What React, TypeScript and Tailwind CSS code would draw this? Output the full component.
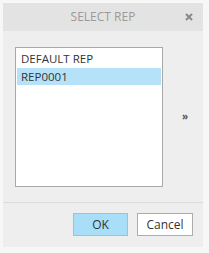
import React from "react";

export default function App() {
  return (
    <div className="w-[209px] h-[253px] bg-[#f7f7f7] p-[3px] pb-[6px]" style={{ fontFamily: '"Open Sans", "Noto Sans", sans-serif' }}>
      <div className="flex h-full w-[200px] flex-col bg-[#eeeeee]">
        <div className="relative flex h-[28px] items-center justify-center bg-[#e3e3e3]">
          <span className="text-[12px] text-[#9a9a9a]">SELECT REP</span>
          <svg className="absolute right-[10px] top-[10px]" width="8" height="8" viewBox="0 0 8 8">
            <path d="M1 1L7 7M7 1L1 7" stroke="#8a8a8a" strokeWidth="2" />
          </svg>
        </div>
        <div className="flex flex-1 pl-[12px] pt-[16px]">
          <div className="h-[140px] w-[148px] border border-[#a9a9a9] bg-white p-[1px] text-[11.5px] leading-[17px] text-[#333]">
            <div className="px-[4px] py-[1px]">DEFAULT REP</div>
            <div className="bg-[#b5e2f9] px-[4px] py-[0px]">REP0001</div>
          </div>
          <div className="flex flex-1 items-start justify-center pt-[62px] pl-[4px] text-[10px] font-bold text-[#555]">»</div>
        </div>
        <div className="border-t border-[#dcdcdc] h-[45px] flex items-start justify-end gap-[9px] pr-[10px] pt-[10px]">
          <div className="flex h-[23px] w-[55px] items-center justify-center border border-[#86c9ec] bg-[#a8def8] text-[12px] text-[#333]">OK</div>
          <div className="flex h-[23px] w-[56px] items-center justify-center border border-[#adadad] bg-white text-[12px] text-[#333]">Cancel</div>
        </div>
      </div>
    </div>
  );
}
